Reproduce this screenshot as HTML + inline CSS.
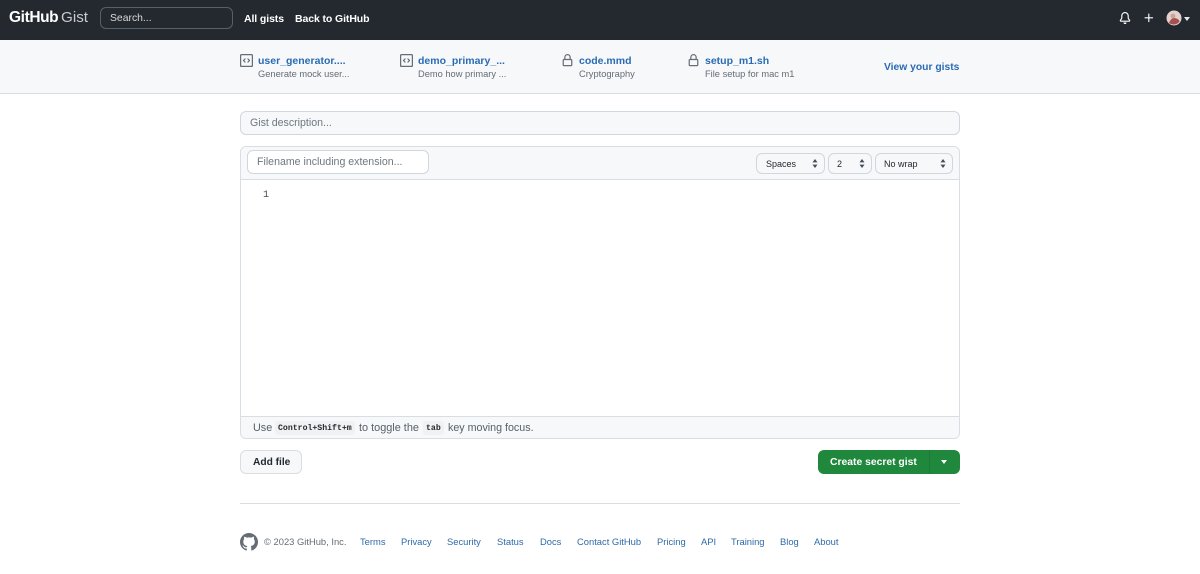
<!DOCTYPE html>
<html lang="en">
<head>
<meta charset="utf-8">
<title>Create a new Gist</title>
<style>
html,body{margin:0;padding:0;width:1200px;height:574px;overflow:hidden;background:#fff;font-family:"Liberation Sans",sans-serif;color:#24292f}
.a{position:absolute;box-sizing:border-box}
.t{position:absolute;white-space:nowrap;line-height:16px;height:16px}
.hd{font-size:10.5px;font-weight:bold;color:#fff;top:11px;letter-spacing:-.1px}
.ln{font-size:10.5px;font-weight:bold;color:#2a6bb3;top:53px}
.ds{font-size:9.3px;color:#656d76;top:66px}
.inp{background:#f6f8fa;border:1px solid #d0d7de;border-radius:6px}
.ph{font-size:10.6px;color:#6e7781}
.sel{top:153px;height:21px;background:#f6f8fa;border:1px solid #d0d7de;border-radius:6px}
.selt{font-size:9px;color:#24292f;top:156px}
.f{font-size:9.4px;color:#2f6aa8;top:534px}
svg{position:absolute;display:block}
code{font-family:"Liberation Mono",monospace}
</style>
</head>
<body>
<!-- header -->
<div class="a" style="left:0;top:0;width:1200px;height:40px;background:#24292f"></div>
<div class="t" style="left:9px;top:9px;font-size:15.5px;font-weight:bold;color:#fff;letter-spacing:-.4px;line-height:18px;height:18px">GitHub</div>
<div class="t" style="left:61px;top:9px;font-size:15.2px;color:#c9cbce;line-height:18px;height:18px">Gist</div>
<div class="a" style="left:100px;top:7px;width:133px;height:22px;border:1px solid #57606a;border-radius:6px;background:#24292f"></div>
<div class="t" style="left:110px;top:11px;font-size:10.4px;color:#d8dadc">Search...</div>
<div class="t hd" style="left:244px">All gists</div>
<div class="t hd" style="left:295px">Back to GitHub</div>
<svg style="left:1119px;top:12px" width="12" height="12" viewBox="0 0 16 16" fill="#fff"><path d="M8 16a2 2 0 0 0 1.985-1.75c.017-.137-.097-.25-.235-.25h-3.5c-.138 0-.252.113-.235.25A2 2 0 0 0 8 16ZM3 5a5 5 0 0 1 10 0v2.947c0 .05.015.098.042.139l1.703 2.555A1.519 1.519 0 0 1 13.482 13H2.518a1.516 1.516 0 0 1-1.263-2.36l1.703-2.554A.255.255 0 0 0 3 7.947Zm5-3.5A3.5 3.5 0 0 0 4.5 5v2.947c0 .346-.102.683-.294.97l-1.703 2.556a.017.017 0 0 0-.003.01l.001.006c0 .002.002.004.004.006l.006.004.007.001h10.964l.007-.001.006-.004.004-.006.001-.007a.017.017 0 0 0-.003-.01l-1.703-2.554a1.745 1.745 0 0 1-.294-.97V5A3.5 3.5 0 0 0 8 1.5Z"/></svg>
<svg style="left:1143px;top:12px" width="12" height="12" viewBox="0 0 16 16" fill="#fff"><path d="M7.75 2a.75.75 0 0 1 .75.75V7h4.25a.75.75 0 0 1 0 1.5H8.5v4.25a.75.75 0 0 1-1.5 0V8.5H2.75a.75.75 0 0 1 0-1.5H7V2.75A.75.75 0 0 1 7.75 2Z"/></svg>
<svg style="left:1166px;top:10px" width="16" height="16" viewBox="0 0 16 16"><circle cx="8" cy="8" r="7.5" fill="#e2d2cd"/><path d="M3 13c1-3 3-5 5-5s5 1 5.5 3.5A7.5 7.5 0 0 1 3 13Z" fill="#a8504f"/><circle cx="7" cy="6" r="2.4" fill="#caa498"/></svg>
<div class="a" style="left:1184px;top:17px;width:0;height:0;border-left:3.5px solid transparent;border-right:3.5px solid transparent;border-top:4px solid #e8e9ea"></div>

<!-- sub nav -->
<div class="a" style="left:0;top:40px;width:1200px;height:54px;background:#f6f8fa;border-bottom:1px solid #d8dee4"></div>
<svg style="left:240px;top:54px" width="13" height="13" viewBox="0 0 16 16" fill="#656d76"><path d="M0 1.75C0 .784.784 0 1.75 0h12.5C15.216 0 16 .784 16 1.75v12.5A1.75 1.75 0 0 1 14.25 16H1.75A1.75 1.75 0 0 1 0 14.25Zm1.75-.25a.25.25 0 0 0-.25.25v12.5c0 .138.112.25.25.25h12.5a.25.25 0 0 0 .25-.25V1.75a.25.25 0 0 0-.25-.25Zm7.47 3.97a.75.75 0 0 1 1.06 0l2 2a.75.75 0 0 1 0 1.06l-2 2a.749.749 0 0 1-1.06-1.06L10.69 8 9.22 6.53a.75.75 0 0 1 0-1.06ZM6.78 6.53 5.31 8l1.47 1.47a.749.749 0 1 1-1.06 1.06l-2-2a.75.75 0 0 1 0-1.06l2-2a.749.749 0 1 1 1.06 1.06Z"/></svg>
<div class="t ln" style="left:258px">user_generator....</div>
<div class="t ds" style="left:258px">Generate mock user...</div>
<svg style="left:400px;top:54px" width="13" height="13" viewBox="0 0 16 16" fill="#656d76"><path d="M0 1.75C0 .784.784 0 1.75 0h12.5C15.216 0 16 .784 16 1.75v12.5A1.75 1.75 0 0 1 14.25 16H1.75A1.75 1.75 0 0 1 0 14.25Zm1.75-.25a.25.25 0 0 0-.25.25v12.5c0 .138.112.25.25.25h12.5a.25.25 0 0 0 .25-.25V1.75a.25.25 0 0 0-.25-.25Zm7.47 3.97a.75.75 0 0 1 1.06 0l2 2a.75.75 0 0 1 0 1.06l-2 2a.749.749 0 0 1-1.06-1.06L10.69 8 9.22 6.53a.75.75 0 0 1 0-1.06ZM6.78 6.53 5.31 8l1.47 1.47a.749.749 0 1 1-1.06 1.06l-2-2a.75.75 0 0 1 0-1.06l2-2a.749.749 0 1 1 1.06 1.06Z"/></svg>
<div class="t ln" style="left:418px">demo_primary_...</div>
<div class="t ds" style="left:418px">Demo how primary ...</div>
<svg style="left:561px;top:54px" width="13" height="13" viewBox="0 0 16 16" fill="#656d76"><path d="M4 4a4 4 0 0 1 8 0v2h.25c.966 0 1.75.784 1.75 1.75v5.5A1.75 1.75 0 0 1 12.25 15h-8.5A1.75 1.75 0 0 1 2 13.25v-5.5C2 6.784 2.784 6 3.75 6H4Zm8.25 3.5h-8.5a.25.25 0 0 0-.25.25v5.5c0 .138.112.25.25.25h8.5a.25.25 0 0 0 .25-.25v-5.5a.25.25 0 0 0-.25-.25ZM10.5 6V4a2.5 2.5 0 1 0-5 0v2Z"/></svg>
<div class="t ln" style="left:579px">code.mmd</div>
<div class="t ds" style="left:579px">Cryptography</div>
<svg style="left:687px;top:54px" width="13" height="13" viewBox="0 0 16 16" fill="#656d76"><path d="M4 4a4 4 0 0 1 8 0v2h.25c.966 0 1.75.784 1.75 1.75v5.5A1.75 1.75 0 0 1 12.25 15h-8.5A1.75 1.75 0 0 1 2 13.25v-5.5C2 6.784 2.784 6 3.75 6H4Zm8.25 3.5h-8.5a.25.25 0 0 0-.25.25v5.5c0 .138.112.25.25.25h8.5a.25.25 0 0 0 .25-.25v-5.5a.25.25 0 0 0-.25-.25ZM10.5 6V4a2.5 2.5 0 1 0-5 0v2Z"/></svg>
<div class="t ln" style="left:705px">setup_m1.sh</div>
<div class="t ds" style="left:705px">File setup for mac m1</div>
<div class="t ln" style="left:884px;top:60px;font-size:10.3px">View your gists</div>

<!-- description -->
<div class="a inp" style="left:240px;top:111px;width:720px;height:24px"></div>
<div class="t ph" style="left:250px;top:115px">Gist description...</div>

<!-- file box -->
<div class="a" style="left:240px;top:146px;width:720px;height:293px;border:1px solid #d8dee4;border-radius:6px;background:#fff"></div>
<div class="a" style="left:241px;top:147px;width:718px;height:33px;background:#f6f8fa;border-bottom:1px solid #d8dee4;border-radius:5px 5px 0 0"></div>
<div class="a" style="left:247px;top:150px;width:182px;height:24px;background:#fff;border:1px solid #d0d7de;border-radius:6px"></div>
<div class="t ph" style="left:257px;top:154px">Filename including extension...</div>

<div class="a sel" style="left:756px;width:69px"></div>
<div class="t selt" style="left:766px">Spaces</div>
<div class="a sel" style="left:828px;width:44px"></div>
<div class="t selt" style="left:837px">2</div>
<div class="a sel" style="left:875px;width:78px"></div>
<div class="t selt" style="left:884px">No wrap</div>
<svg style="left:812px;top:159px" width="6" height="9" viewBox="0 0 6 9" fill="#444d56"><path d="M3 0 5.5 3.4H.5ZM3 9 .5 5.6h5Z"/></svg>
<svg style="left:859px;top:159px" width="6" height="9" viewBox="0 0 6 9" fill="#444d56"><path d="M3 0 5.5 3.4H.5ZM3 9 .5 5.6h5Z"/></svg>
<svg style="left:940px;top:159px" width="6" height="9" viewBox="0 0 6 9" fill="#444d56"><path d="M3 0 5.5 3.4H.5ZM3 9 .5 5.6h5Z"/></svg>

<div class="t" style="left:263px;top:188px;font-family:'Liberation Mono',monospace;font-size:10px;color:#444d56">1</div>

<div class="a" style="left:241px;top:416px;width:718px;height:22px;background:#f6f8fa;border-top:1px solid #d8dee4;border-radius:0 0 5px 5px"></div>
<div class="t" style="left:253px;top:420px;font-size:10.8px;color:#57606a">Use</div>
<div class="a" style="left:275px;top:421px;width:80px;height:14px;background:#eff1f3;border-radius:3px"></div>
<code class="t" style="left:278px;top:421px;font-size:8.2px;font-weight:bold;color:#24292f">Control+Shift+m</code>
<div class="t" style="left:359px;top:420px;font-size:10.9px;color:#57606a">to toggle the</div>
<div class="a" style="left:423px;top:421px;width:21px;height:14px;background:#eff1f3;border-radius:3px"></div>
<code class="t" style="left:426px;top:421px;font-size:8.2px;font-weight:bold;color:#24292f">tab</code>
<div class="t" style="left:448px;top:420px;font-size:10.7px;color:#57606a">key moving focus.</div>

<!-- actions -->
<div class="a" style="left:240px;top:450px;width:62px;height:24px;background:#f6f8fa;border:1px solid #d8dee4;border-radius:6px"></div>
<div class="t" style="left:253px;top:455px;font-size:10.2px;font-weight:bold;color:#24292f">Add file</div>
<div class="a" style="left:818px;top:450px;width:142px;height:24px;background:#1f883d;border-radius:6px"></div>
<div class="a" style="left:929px;top:450px;width:1px;height:24px;background:#1b7a36"></div>
<div class="t" style="left:830px;top:455px;font-size:10.35px;font-weight:bold;color:#fff">Create secret gist</div>
<div class="a" style="left:941px;top:460px;width:0;height:0;border-left:3.5px solid transparent;border-right:3.5px solid transparent;border-top:4px solid #fff"></div>

<!-- footer -->
<div class="a" style="left:240px;top:503px;width:720px;height:1px;background:#d8dee4"></div>
<svg style="left:240px;top:533px" width="18" height="18" viewBox="0 0 16 16" fill="#656d76"><path d="M8 0C3.58 0 0 3.58 0 8c0 3.54 2.29 6.53 5.47 7.59.4.07.55-.17.55-.38 0-.19-.01-.82-.01-1.49-2.01.37-2.53-.49-2.69-.94-.09-.23-.48-.94-.82-1.13-.28-.15-.68-.52-.01-.53.63-.01 1.08.58 1.23.82.72 1.21 1.87.87 2.33.66.07-.52.28-.87.51-1.07-1.78-.2-3.64-.89-3.64-3.95 0-.87.31-1.59.82-2.15-.08-.2-.36-1.02.08-2.12 0 0 .67-.21 2.2.82.64-.18 1.32-.27 2-.27.68 0 1.36.09 2 .27 1.53-1.04 2.2-.82 2.2-.82.44 1.1.16 1.92.08 2.12.51.56.82 1.27.82 2.15 0 3.07-1.87 3.75-3.65 3.95.29.25.54.73.54 1.48 0 1.07-.01 1.93-.01 2.2 0 .21.15.46.55.38A8.013 8.013 0 0016 8c0-4.42-3.58-8-8-8z"/></svg>
<div class="t f" style="left:264px;color:#656d76">© 2023 GitHub, Inc.</div>
<div class="t f" style="left:360px">Terms</div>
<div class="t f" style="left:401px">Privacy</div>
<div class="t f" style="left:447px">Security</div>
<div class="t f" style="left:497px">Status</div>
<div class="t f" style="left:540px">Docs</div>
<div class="t f" style="left:577px">Contact GitHub</div>
<div class="t f" style="left:657px">Pricing</div>
<div class="t f" style="left:701px">API</div>
<div class="t f" style="left:731px">Training</div>
<div class="t f" style="left:780px">Blog</div>
<div class="t f" style="left:814px">About</div>
</body>
</html>
